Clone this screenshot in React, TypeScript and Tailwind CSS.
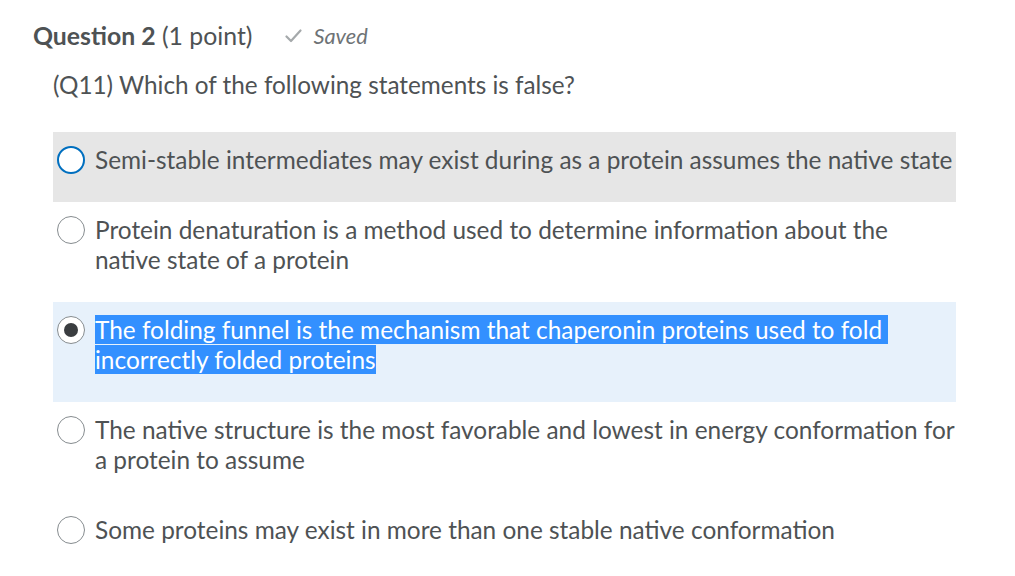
import React from "react";

type Option = {
  lines: string[];
  state: "focus" | "idle" | "checked";
};

const options: Option[] = [
  {
    lines: ["Semi-stable intermediates may exist during as a protein assumes the native state"],
    state: "focus",
  },
  {
    lines: [
      "Protein denaturation is a method used to determine information about the",
      "native state of a protein",
    ],
    state: "idle",
  },
  {
    lines: [
      "The folding funnel is the mechanism that chaperonin proteins used to fold ",
      "incorrectly folded proteins",
    ],
    state: "checked",
  },
  {
    lines: [
      "The native structure is the most favorable and lowest in energy conformation for",
      "a protein to assume",
    ],
    state: "idle",
  },
  {
    lines: ["Some proteins may exist in more than one stable native conformation"],
    state: "idle",
  },
];

const Radio = ({ state }: { state: Option["state"] }) => {
  if (state === "focus") {
    return (
      <span className="mt-[1px] h-[28px] w-[28px] shrink-0 rounded-full border-2 border-[#006fbf] bg-white" />
    );
  }
  if (state === "checked") {
    return (
      <span className="mt-[1px] flex h-[28px] w-[28px] shrink-0 items-center justify-center rounded-full border border-[#868c8f] bg-white">
        <span className="h-[14px] w-[14px] rounded-full bg-[#3a3d40]" />
      </span>
    );
  }
  return (
    <span className="mt-[1px] h-[28px] w-[28px] shrink-0 rounded-full border border-[#868c8f] bg-white" />
  );
};

export default function App() {
  return (
    <div
      className="min-h-[576px] w-[1015px] bg-white text-[#4e5254]"
      style={{ fontFamily: "Lato, 'Open Sans', sans-serif" }}
    >
      <div className="pl-[33px] pt-[20px]">
        <div className="flex items-center">
          <h2 className="text-[24.8px] leading-[30px]">
            <span className="font-bold">Question 2</span> (1 point)
          </h2>
          <span className="ml-[33px] flex items-center gap-[11px] text-[#6e7376]">
            <svg width="17" height="14" viewBox="0 0 17 14" fill="none">
              <path d="M1.5 7.5 L6 12 L15.5 1.5" stroke="#a5a9ab" strokeWidth="2.2" strokeLinecap="round" strokeLinejoin="round" />
            </svg>
            <span className="text-[21.8px] italic">Saved</span>
          </span>
        </div>
        <p className="ml-[20px] mt-[17px] text-[24.3px] leading-[30px]">
          (Q11) Which of the following statements is false?
        </p>
      </div>

      <div className="ml-[53px] mt-[32px] w-[903px]">
        {options.map((o, i) => (
          <div
            key={i}
            className={`flex gap-[10px] pb-[27px] pl-[4px] pt-[13px] ${
              o.state === "focus" ? "bg-[#e6e6e6]" : o.state === "checked" ? "bg-[#e7f1fb]" : ""
            }`}
          >
            <Radio state={o.state} />
            <div className="whitespace-pre text-[24.4px] leading-[30px]">
              {o.lines.map((l, j) => (
                <div key={j}>
                  {o.state === "checked" ? (
                    <span className="bg-[#3390ff] text-white">{l}</span>
                  ) : (
                    l
                  )}
                </div>
              ))}
            </div>
          </div>
        ))}
      </div>
    </div>
  );
}
